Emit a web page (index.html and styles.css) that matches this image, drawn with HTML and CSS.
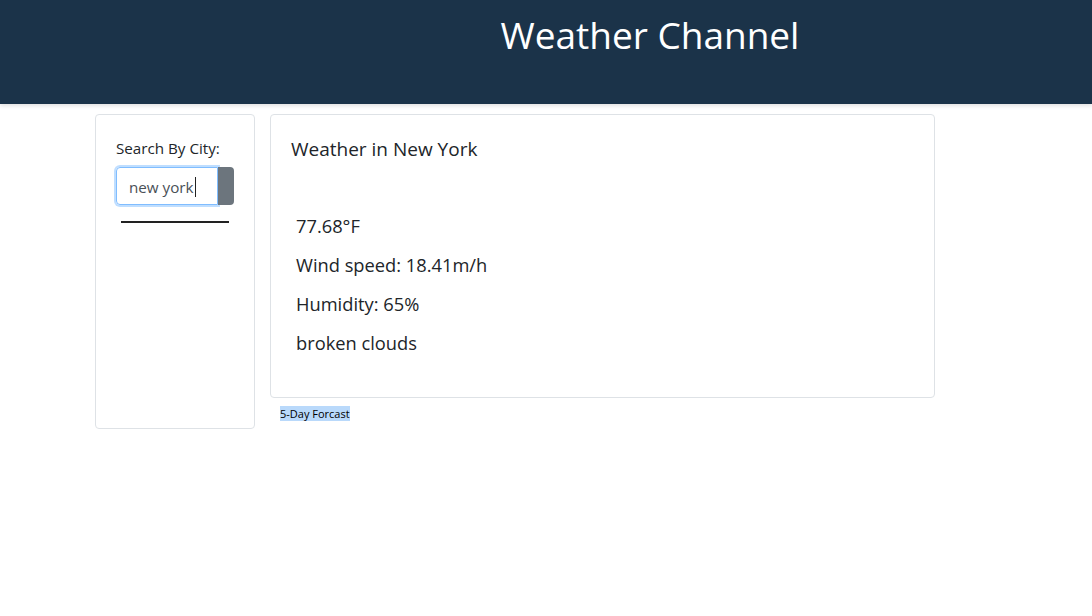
FILE: index.html
```html
<!DOCTYPE html>
<html>
<head>
<meta charset="utf-8">
<link rel="stylesheet" href="styles.css">
</head>
<body>
<header class="topbar">
  <h1 class="title">Weather Channel</h1>
</header>
<main class="layout">
  <aside class="side-card">
    <label class="side-label">Search By City:</label>
    <div class="search-row">
      <div class="search-input">new york<span class="caret"></span></div>
      <button class="search-btn"></button>
    </div>
    <hr class="side-rule">
  </aside>
  <section class="content">
    <div class="weather-card">
      <h2 class="weather-title">Weather in New York</h2>
      <ul class="stats">
        <li>77.68°F</li>
        <li>Wind speed: 18.41m/h</li>
        <li>Humidity: 65%</li>
        <li>broken clouds</li>
      </ul>
    </div>
    <p class="forecast"><span class="sel">5-Day Forcast</span></p>
  </section>
</main>
</body>
</html>
```
FILE: styles.css
```css
* { box-sizing: border-box; }
body {
  margin: 0;
  font-family: "Open Sans", "Noto Sans", sans-serif;
  color: #212529;
  background: #fff;
}
.topbar {
  height: 104px;
  background: #1b3349;
  box-shadow: 0 2px 4px rgba(0,0,0,0.12);
  display: flex;
  justify-content: center;
  padding-left: 208px;
}
.title {
  margin: 11px 0 0;
  font-weight: 400;
  font-size: 37px;
  line-height: 48px;
  color: #fff;
}
.layout {
  display: flex;
  align-items: flex-start;
  gap: 15px;
  padding: 10px 0 0 95px;
}
.side-card {
  width: 160px;
  height: 315px;
  border: 1px solid #dee2e6;
  border-radius: 4px;
  padding: 23px 20px 0 20px;
}
.side-label {
  display: block;
  font-size: 15.2px;
  line-height: 20px;
}
.search-row {
  display: flex;
  margin-top: 9px;
}
.search-input {
  width: 102px;
  height: 38px;
  border: 1px solid #80bdff;
  border-radius: 4px 0 0 4px;
  box-shadow: 0 0 0 2px rgba(0,123,255,0.25);
  padding: 2px 12px 0;
  font-size: 15.2px;
  line-height: 34px;
  color: #495057;
  display: flex;
  align-items: center;
}
.caret {
  display: inline-block;
  width: 1px;
  height: 20px;
  background: #222;
  margin-left: 1px;
}
.search-btn {
  width: 16px;
  height: 38px;
  border: none;
  background: #6c757d;
  border-radius: 0 4px 4px 0;
  padding: 0;
}
.side-rule {
  margin: 16px 5px 0 5px;
  border: 0;
  border-top: 2px solid #222;
}
.content {
  width: 665px;
}
.weather-card {
  height: 284px;
  border: 1px solid #dee2e6;
  border-radius: 4px;
  padding: 20px 20px 0 20px;
}
.weather-title {
  margin: 0;
  font-weight: 400;
  font-size: 19px;
  line-height: 28px;
}
.stats {
  list-style: none;
  margin: 43px 0 0;
  padding: 0 0 0 5px;
}
.stats li {
  font-size: 18.3px;
  line-height: 39px;
}
.forecast {
  margin: 9px 0 0 10px;
  font-size: 11px;
  line-height: 14px;
  color: #000;
}
.sel {
  background: #b9d9fb;
}
```
